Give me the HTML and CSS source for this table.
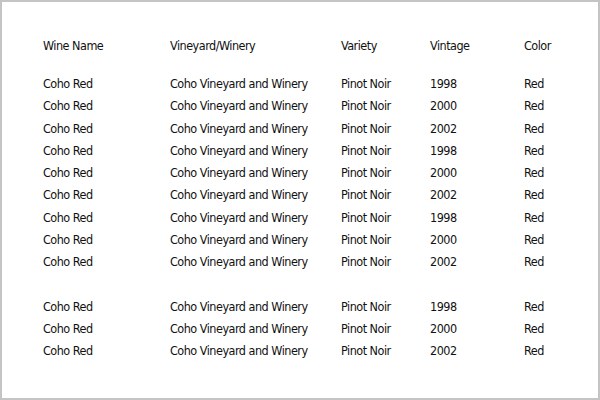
FILE: index.html
```html
<!DOCTYPE html>
<html>
<head>
<meta charset="utf-8">
<link rel="stylesheet" href="styles.css">
</head>
<body>
<div class="frame">
  <div class="sheet">
    <div class="row head">
      <span>Wine Name</span><span>Vineyard/Winery</span><span>Variety</span><span>Vintage</span><span>Color</span>
    </div>
    <div class="group">
      <div class="row"><span>Coho Red</span><span>Coho Vineyard and Winery</span><span>Pinot Noir</span><span>1998</span><span>Red</span></div>
      <div class="row"><span>Coho Red</span><span>Coho Vineyard and Winery</span><span>Pinot Noir</span><span>2000</span><span>Red</span></div>
      <div class="row"><span>Coho Red</span><span>Coho Vineyard and Winery</span><span>Pinot Noir</span><span>2002</span><span>Red</span></div>
      <div class="row"><span>Coho Red</span><span>Coho Vineyard and Winery</span><span>Pinot Noir</span><span>1998</span><span>Red</span></div>
      <div class="row"><span>Coho Red</span><span>Coho Vineyard and Winery</span><span>Pinot Noir</span><span>2000</span><span>Red</span></div>
      <div class="row"><span>Coho Red</span><span>Coho Vineyard and Winery</span><span>Pinot Noir</span><span>2002</span><span>Red</span></div>
      <div class="row"><span>Coho Red</span><span>Coho Vineyard and Winery</span><span>Pinot Noir</span><span>1998</span><span>Red</span></div>
      <div class="row"><span>Coho Red</span><span>Coho Vineyard and Winery</span><span>Pinot Noir</span><span>2000</span><span>Red</span></div>
      <div class="row"><span>Coho Red</span><span>Coho Vineyard and Winery</span><span>Pinot Noir</span><span>2002</span><span>Red</span></div>
    </div>
    <div class="group">
      <div class="row"><span>Coho Red</span><span>Coho Vineyard and Winery</span><span>Pinot Noir</span><span>1998</span><span>Red</span></div>
      <div class="row"><span>Coho Red</span><span>Coho Vineyard and Winery</span><span>Pinot Noir</span><span>2000</span><span>Red</span></div>
      <div class="row"><span>Coho Red</span><span>Coho Vineyard and Winery</span><span>Pinot Noir</span><span>2002</span><span>Red</span></div>
    </div>
  </div>
</div>
</body>
</html>
```
FILE: styles.css
```css
html, body {
  margin: 0;
  padding: 0;
  background: #ffffff;
}
.frame {
  box-sizing: border-box;
  width: 600px;
  height: 400px;
  border: 2px solid #c4c4c4;
  background: #ffffff;
  padding: 33px 0 0 41px;
}
.sheet {
  font-family: "DejaVu Sans Condensed", "DejaVu Sans", sans-serif;
  font-size: 12.5px;
  letter-spacing: -0.5px;
  color: #111111;
  display: flex;
  flex-direction: column;
}
.row {
  display: grid;
  grid-template-columns: 127px 171px 89px 94px 60px;
  height: 22.25px;
  line-height: 22.25px;
  white-space: nowrap;
}
.head {
  margin-bottom: 15.75px;
}
.group + .group {
  margin-top: 22.25px;
}
```
